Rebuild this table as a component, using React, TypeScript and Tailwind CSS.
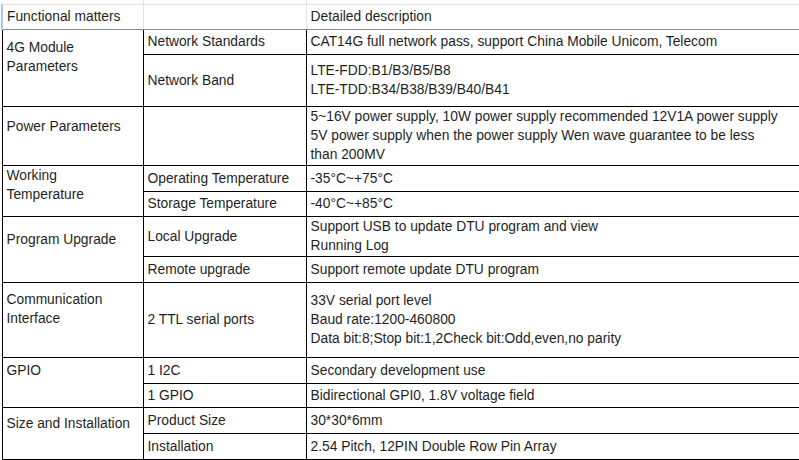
type Sub = { name: string; desc: string[]; h: string };
type Group = { label: string[]; pt: string; subs: Sub[] };

const groups: Group[] = [
  {
    label: ["4G Module", "Parameters"],
    pt: "pt-[8px]",
    subs: [
      {
        name: "Network Standards",
        desc: ["CAT14G full network pass, support China Mobile Unicom, Telecom"],
        h: "h-[25px]",
      },
      {
        name: "Network Band",
        desc: ["LTE-FDD:B1/B3/B5/B8", "LTE-TDD:B34/B38/B39/B40/B41"],
        h: "h-[52px]",
      },
    ],
  },
  {
    label: ["Power Parameters"],
    pt: "pt-[10px]",
    subs: [
      {
        name: "",
        desc: [
          "5~16V power supply, 10W power supply recommended 12V1A power supply",
          "5V power supply when the power supply Wen wave guarantee to be less",
          "than 200MV",
        ],
        h: "h-[59px]",
      },
    ],
  },
  {
    label: ["Working", "Temperature"],
    pt: "pt-0",
    subs: [
      { name: "Operating Temperature", desc: ["-35°C~+75°C"], h: "h-[26px]" },
      { name: "Storage Temperature", desc: ["-40°C~+85°C"], h: "h-[25px]" },
    ],
  },
  {
    label: ["Program Upgrade"],
    pt: "pt-[13px]",
    subs: [
      {
        name: "Local Upgrade",
        desc: ["Support USB to update DTU program and view", "Running Log"],
        h: "h-[40px]",
      },
      { name: "Remote upgrade", desc: ["Support remote update DTU program"], h: "h-[26px]" },
    ],
  },
  {
    label: ["Communication", "Interface"],
    pt: "pt-[7px]",
    subs: [
      {
        name: "2 TTL serial ports",
        desc: [
          "33V serial port level",
          "Baud rate:1200-460800",
          "Data bit:8;Stop bit:1,2Check bit:Odd,even,no parity",
        ],
        h: "h-[75px]",
      },
    ],
  },
  {
    label: ["GPIO"],
    pt: "pt-[3px]",
    subs: [
      { name: "1 I2C", desc: ["Secondary development use"], h: "h-[26px]" },
      { name: "1 GPIO", desc: ["Bidirectional GPI0, 1.8V voltage field"], h: "h-[24px]" },
    ],
  },
  {
    label: ["Size and Installation"],
    pt: "pt-[6px]",
    subs: [
      { name: "Product Size", desc: ["30*30*6mm"], h: "h-[26px]" },
      { name: "Installation", desc: ["2.54 Pitch, 12PIN Double Row Pin Array"], h: "h-[26px]" },
    ],
  },
];

const App = () => {
  return (
    <div className="w-[799px] h-[460px] bg-white overflow-hidden font-['Liberation_Sans',Arial,sans-serif] text-[13.8px] leading-[19px] text-[#1f1f1f]">
      <table className="table-fixed border-collapse w-[797px] ml-[1px]">
        <colgroup>
          <col className="w-[141px]" />
          <col className="w-[163px]" />
          <col className="w-[493px]" />
        </colgroup>
        <tbody>
          {/* strip above the header */}
          <tr className="h-[4px]">
            <td className="p-0 border-r border-b border-[#e2e2e2]" />
            <td className="p-0 border-r border-b border-[#e2e2e2]" />
            <td className="p-0 border-r border-b border-[#e2e2e2]" />
          </tr>
          <tr className="h-[25px]">
            <td className="p-0 px-[4px] border-l-2 border-l-[#a8c7fa] border-r border-r-[#e2e2e2] border-b border-b-[#8a8a8a] whitespace-nowrap">
              Functional matters
            </td>
            <td className="p-0 border-r border-r-[#e2e2e2] border-b border-b-[#8a8a8a]" />
            <td className="p-0 px-[4px] border-r border-r-[#e2e2e2] border-b border-b-[#8a8a8a]">
              Detailed description
            </td>
          </tr>
          {groups.map((g) =>
            g.subs.map((s, i) => (
              <tr key={g.label.join() + i} className={s.h}>
                {i === 0 && (
                  <td
                    rowSpan={g.subs.length}
                    className={`p-0 px-[4px] align-top border border-black ${g.pt}`}
                  >
                    {g.label.map((l) => (
                      <div key={l} className="whitespace-nowrap">
                        {l}
                      </div>
                    ))}
                  </td>
                )}
                <td className="p-0 px-[4px] align-middle border border-black whitespace-nowrap">
                  {s.name}
                </td>
                <td className="p-0 px-[4px] align-middle border border-black">
                  {s.desc.map((d) => (
                    <div key={d} className="whitespace-nowrap">
                      {d}
                    </div>
                  ))}
                </td>
              </tr>
            ))
          )}
        </tbody>
      </table>
    </div>
  );
};

export default App;
